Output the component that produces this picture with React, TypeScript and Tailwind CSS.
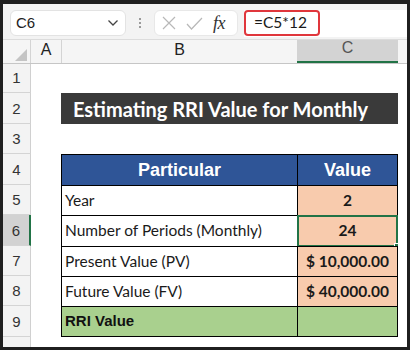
import React from 'react';

const calibri = { fontFamily: 'Lato, "Liberation Sans", sans-serif' };

const rowHeights = [29, 31, 30, 31, 30, 31, 30, 30, 31];

const RowHead: React.FC<{ n: number; h: number; active?: boolean }> = ({ n, h, active }) => (
  <div
    className={`w-[28px] shrink-0 flex items-end justify-center pb-[3px] border-b border-[#d4d4d4] text-[15px] text-[#333] font-['Liberation_Sans',sans-serif] ${
      active ? 'bg-[#d2d2d2] border-r-2 border-r-[#217346]' : 'bg-[#f3f3f3] border-r border-r-[#d0d0d0]'
    }`}
    style={{ height: h }}
  >
    {n}
  </div>
);

const Row: React.FC<{ n: number; active?: boolean; children?: React.ReactNode }> = ({ n, active, children }) => {
  const h = rowHeights[n - 1];
  return (
    <div className="flex" style={{ height: h }}>
      <RowHead n={n} h={h} active={active} />
      <div className="w-[30px] shrink-0" />
      {children}
    </div>
  );
};

const DataRow: React.FC<{ n: number; label: string; value: string; active?: boolean; right?: boolean }> = ({ n, label, value, active, right }) => (
  <Row n={n} active={active}>
    <div className="w-[236px] shrink-0 border-l border-t border-black bg-white flex items-center pl-[3px] text-[15.5px] text-[#1a1a1a]" style={calibri}>
      {label}
    </div>
    <div className="w-[101px] shrink-0 border-l border-r border-t border-black bg-[#f8cbad] relative">
      <div
        className={`absolute inset-0 flex items-center font-bold text-[15.5px] text-[#1a1a1a] ${right ? 'justify-end pr-[8px]' : 'justify-center'} ${
          active ? 'border-2 border-[#217346] -m-[1px]' : ''
        }`}
        style={calibri}
      >
        {value}
        {active && <span className="absolute -right-[3px] -bottom-[3px] w-[5px] h-[5px] bg-[#217346] border border-white" />}
      </div>
    </div>
  </Row>
);

export default function App() {
  return (
    <div className="w-[410px] h-[350px] bg-[#1f1f1f] pt-[4px] pl-[3px] pr-[3px] pb-[3px] overflow-hidden">
      <div className="w-full h-full bg-white overflow-hidden">
        {/* formula bar */}
        <div className="h-[36px] bg-[#f3f3f3] flex items-start pt-[6px] border-b border-[#dcdcdc]">
          <div className="ml-[7px] w-[116px] h-[26px] bg-white border border-[#e3e3e3] rounded-[6px] flex items-center justify-between pl-[5px] pr-[6px]">
            <span className="text-[15px] text-[#222] font-['Liberation_Sans',sans-serif]">C6</span>
            <svg width="12" height="8" viewBox="0 0 12 8">
              <path d="M1.5 1.5 L6 6 L10.5 1.5" fill="none" stroke="#444" strokeWidth="1.3" />
            </svg>
          </div>
          <div className="w-[28px] h-[26px] flex flex-col items-center justify-center gap-[2px]">
            <span className="w-[2px] h-[2px] bg-[#9a9a9a]" />
            <span className="w-[2px] h-[2px] bg-[#9a9a9a]" />
            <span className="w-[2px] h-[2px] bg-[#9a9a9a]" />
          </div>
          <div className="w-[84px] h-[26px] bg-white border border-[#e8e8e8] rounded-[6px] flex items-center pl-[7px] gap-[10px]">
            <svg width="14" height="14" viewBox="0 0 14 14">
              <path d="M1 1 L13 13 M13 1 L1 13" stroke="#b8b8b8" strokeWidth="1.2" fill="none" />
            </svg>
            <svg width="17" height="13" viewBox="0 0 17 13">
              <path d="M1 7 L5.5 12 L16 1" stroke="#b8b8b8" strokeWidth="1.2" fill="none" />
            </svg>
            <span className="text-[18px] leading-none italic text-[#333] font-['Liberation_Serif',serif] tracking-[-0.5px]">fx</span>
          </div>
          <div className="ml-[6px] flex-1 h-[27px] bg-white flex items-start">
            <div className="w-[76px] h-[26px] border-2 border-[#e0363c] rounded-[4px] flex items-center pl-[8px] text-[15.5px] text-[#1a1a1a]" style={calibri}>
              =C5*12
            </div>
          </div>
        </div>
        {/* column headers */}
        <div className="flex h-[24px] bg-[#f5f5f5] border-b border-[#c6c6c6]">
          <div className="w-[28px] shrink-0 relative border-r border-[#d4d4d4]">
            <svg className="absolute left-[12px] top-[9px]" width="12" height="12" viewBox="0 0 12 12">
              <path d="M12 0 L12 12 L0 12 Z" fill="#c4c4c4" />
            </svg>
          </div>
          <div className="w-[31px] shrink-0 border-r border-[#d4d4d4] flex items-end justify-center pb-[1px] text-[16px] text-[#222] font-['Liberation_Sans',sans-serif]">A</div>
          <div className="w-[235px] shrink-0 flex items-end justify-center pb-[1px] text-[16px] text-[#222] font-['Liberation_Sans',sans-serif]">B</div>
          <div className="w-[101px] shrink-0 bg-[#d3d3d3] border-b-2 border-[#217346] flex items-end justify-center pb-[1px] text-[16px] text-[#555] font-['Liberation_Sans',sans-serif]">C</div>
          <div className="flex-1" />
        </div>
        {/* rows */}
        <Row n={1} />
        <Row n={2}>
          <div className="w-[337px] shrink-0 bg-[#3a3a3a] flex items-center justify-center pr-[18px] text-white font-bold text-[20px]" style={calibri}>
            Estimating RRI Value for Monthly
          </div>
        </Row>
        <Row n={3} />
        <Row n={4}>
          <div className="w-[236px] shrink-0 border-l border-t border-black bg-[#2f5597] flex items-center justify-center text-white font-bold text-[18px] font-['Liberation_Sans',sans-serif]">
            Particular
          </div>
          <div className="w-[101px] shrink-0 border-l border-r border-t border-black bg-[#2f5597] flex items-center justify-center text-white font-bold text-[18px] font-['Liberation_Sans',sans-serif]">
            Value
          </div>
        </Row>
        <DataRow n={5} label="Year" value="2" />
        <DataRow n={6} label="Number of Periods (Monthly)" value="24" active />
        <DataRow n={7} label="Present Value (PV)" value="$ 10,000.00" right />
        <DataRow n={8} label="Future Value (FV)" value="$ 40,000.00" right />
        <Row n={9}>
          <div className="w-[236px] shrink-0 border border-r-0 border-black bg-[#a9d08e] flex items-center pl-[3px] font-bold text-[15px] text-[#111] font-['Liberation_Sans',sans-serif]">
            RRI Value
          </div>
          <div className="w-[101px] shrink-0 border border-black bg-[#a9d08e]" />
        </Row>
        <div className="flex h-[12px]">
          <div className="w-[28px] bg-[#f3f3f3] border-r border-[#d0d0d0]" />
        </div>
      </div>
    </div>
  );
}
